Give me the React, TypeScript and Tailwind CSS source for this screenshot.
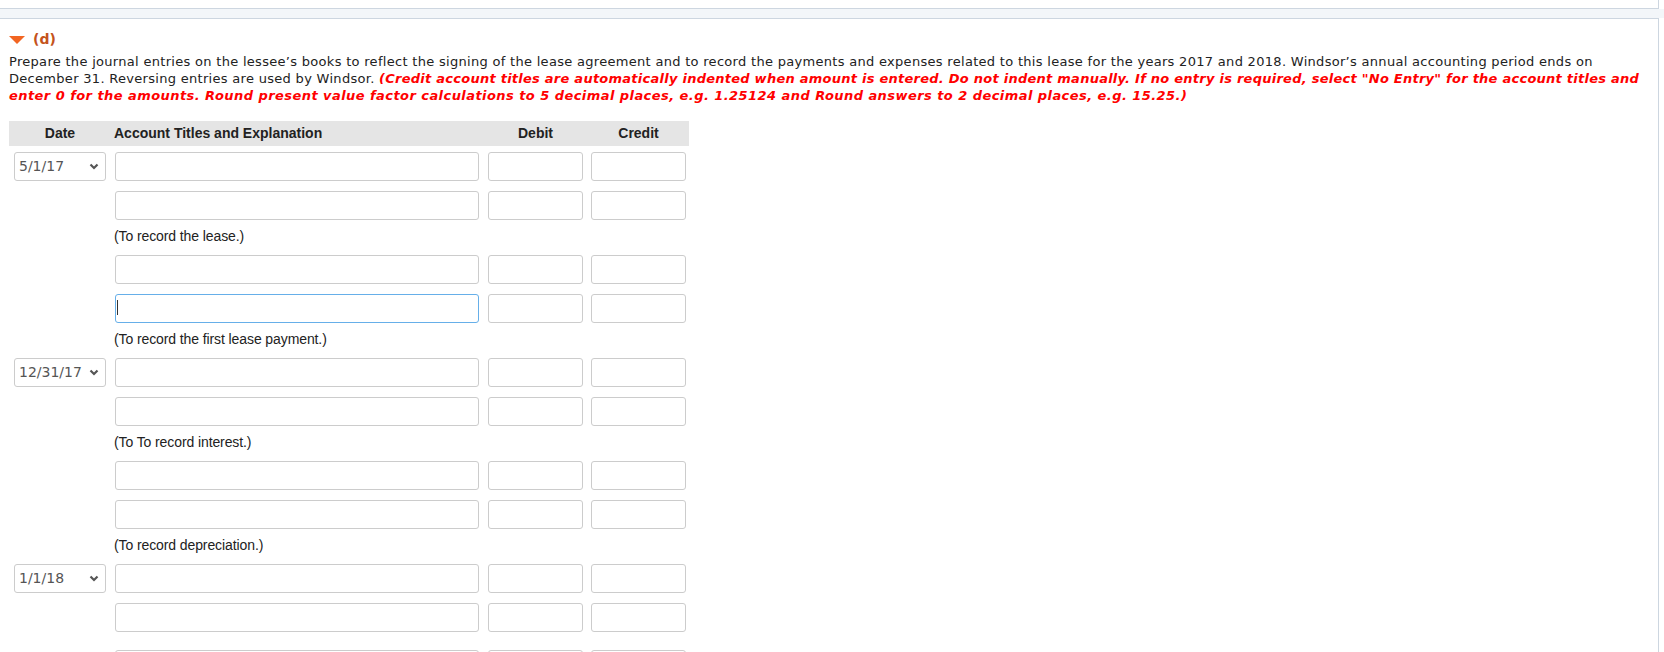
const entries = [
  { date: "5/1/17", rows: 2, note: "(To record the lease.)", focus: -1 },
  { date: "", rows: 2, note: "(To record the first lease payment.)", focus: 1 },
  { date: "12/31/17", rows: 2, note: "(To To record interest.)", focus: -1 },
  { date: "", rows: 2, note: "(To record depreciation.)", focus: -1 },
  { date: "1/1/18", rows: 3, note: "", focus: -1 },
];

function DateSelect({ value }: { value: string }) {
  return (
    <div className="flex h-[29px] w-[92px] items-center justify-between rounded-[3px] border border-[#cccccc] bg-white pl-[4px] pr-[6px] font-['DejaVu_Sans',sans-serif] text-[14px] text-[#555555]">
      <span>{value}</span>
      <svg width="10" height="7" viewBox="0 0 10 7" fill="none">
        <polyline points="1.5,1.5 5,5 8.5,1.5" stroke="#555555" strokeWidth="2.2" />
      </svg>
    </div>
  );
}

function Field({ width, focused }: { width: string; focused?: boolean }) {
  return (
    <div className="relative">
      <input
        readOnly
        className={`block h-[29px] ${width} rounded-[3px] border bg-white outline-none ${
          focused ? "border-[#66afe9]" : "border-[#cccccc]"
        }`}
      />
      {focused && (
        <span className="absolute left-[2px] top-[6px] h-[15px] w-px bg-[#333333]" />
      )}
    </div>
  );
}

function EntryRow({ date, focused }: { date: string; focused?: boolean }) {
  return (
    <div className="mb-[10px] flex h-[29px] items-start">
      <div className="w-[105px] pl-[5px]">{date && <DateSelect value={date} />}</div>
      <div className="ml-[1px]">
        <Field width="w-[364px]" focused={focused} />
      </div>
      <div className="ml-[9px]">
        <Field width="w-[95px]" />
      </div>
      <div className="ml-[8px]">
        <Field width="w-[95px]" />
      </div>
    </div>
  );
}

export default function App() {
  return (
    <div className="min-h-screen bg-white">
      <div className="h-[9px] w-[1659px] border-b border-r border-[#cdd6e0]" />
      <div className="h-[9px] bg-[#f3f6f9]" />
      <div className="w-[1659px] border-r border-t border-[#cdd6e0] pl-[9px] pr-[4px] pt-[12px]">
        <div className="flex h-[17px] items-center">
          <svg width="16" height="8" viewBox="0 0 16 8" className="mt-[1px]">
            <polygon points="0,0 16,0 8,8" fill="#f26522" />
          </svg>
          <span className="ml-[8px] font-['DejaVu_Sans',sans-serif] text-[14px] font-bold text-[#c4531c]">
            (d)
          </span>
        </div>
        <p className="mt-[5px] whitespace-nowrap font-['DejaVu_Sans',sans-serif] text-[13px] leading-[17px] tracking-[0.3px] text-[#222222]">
          Prepare the journal entries on the lessee’s books to reflect the signing of the lease agreement and to record the payments and expenses related to this lease for the years 2017 and 2018. Windsor’s annual accounting period ends on
          <br />
          December 31. Reversing entries are used by Windsor.{" "}
          <span className="font-bold italic text-[#ff0000]">
            <span className="tracking-[0.25px]">
              (Credit account titles are automatically indented when amount is entered. Do not indent manually. If no entry is required, select "No Entry" for the account titles and
            </span>
            <br />
            <span className="tracking-[0.44px]">
              enter 0 for the amounts. Round present value factor calculations to 5 decimal places, e.g. 1.25124 and Round answers to 2 decimal places, e.g. 15.25.)
            </span>
          </span>
        </p>

        <div className="mt-[17px] flex h-[25px] w-[680px] items-center bg-[#e5e5e5] font-['Liberation_Sans',sans-serif] text-[14px] font-bold text-[#222222]">
          <div className="w-[102px] text-center">Date</div>
          <div className="w-[377px] pl-[3px]">Account Titles and Explanation</div>
          <div className="w-[95px] text-center">Debit</div>
          <div className="ml-[8px] w-[95px] text-center">Credit</div>
        </div>

        <div className="mt-[6px]">
          {entries.map((entry, i) => (
            <div key={i}>
              {Array.from({ length: entry.rows }).map((_, r) => (
                <div key={r} className={r === 2 ? "mt-[18px]" : ""}>
                  <EntryRow date={r === 0 ? entry.date : ""} focused={entry.focus === r} />
                </div>
              ))}
              {entry.note && (
                <div className="h-[25px] pl-[105px] font-['Liberation_Sans',sans-serif] text-[14px] leading-[13px] tracking-[-0.1px] text-[#222222]">
                  {entry.note}
                </div>
              )}
            </div>
          ))}
        </div>
      </div>
    </div>
  );
}
